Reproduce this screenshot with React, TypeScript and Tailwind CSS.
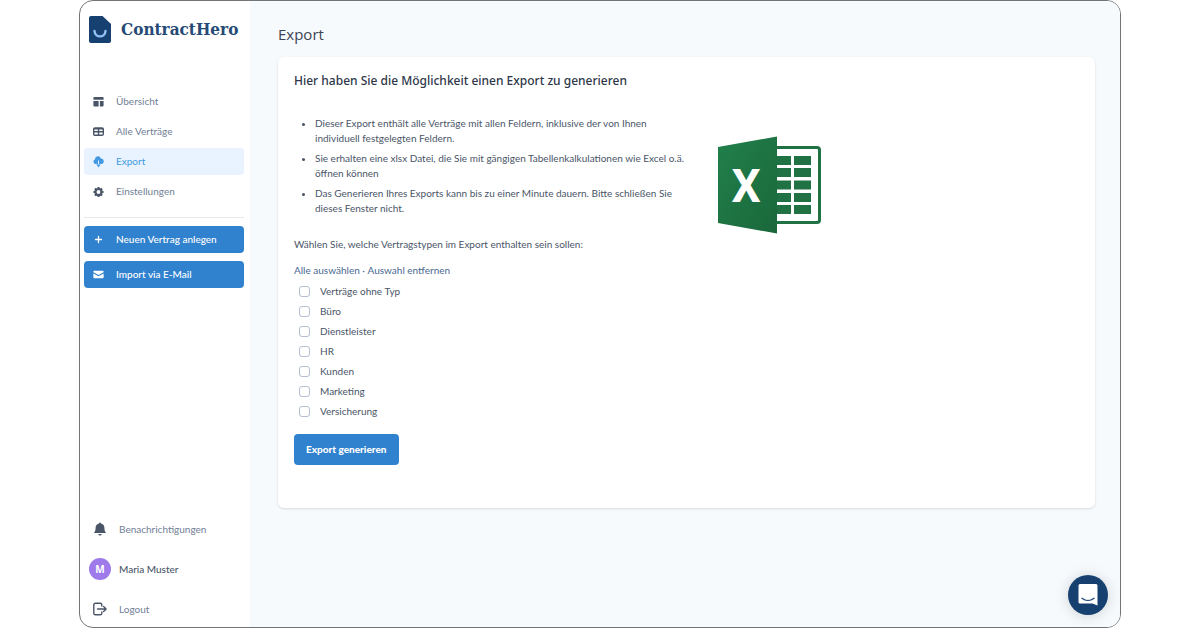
import { useState } from "react";
import type { ReactNode } from "react";

const CONTRACT_TYPES = [
  "Verträge ohne Typ",
  "Büro",
  "Dienstleister",
  "HR",
  "Kunden",
  "Marketing",
  "Versicherung",
];

const HINTS = [
  "Dieser Export enthält alle Verträge mit allen Feldern, inklusive der von Ihnen individuell festgelegten Feldern.",
  "Sie erhalten eine xlsx Datei, die Sie mit gängigen Tabellenkalkulationen wie Excel o.ä. öffnen können",
  "Das Generieren Ihres Exports kann bis zu einer Minute dauern. Bitte schließen Sie dieses Fenster nicht.",
];

function LogoIcon() {
  return (
    <svg width="22" height="27" viewBox="0 0 22 27" aria-hidden="true">
      <path d="M2 0h11.500l8.500 8v17a2 2 0 0 1-2 2H2a2 2 0 0 1-2-2V2a2 2 0 0 1 2-2z" fill="#15406f" />
      <path d="M5.500 15c.5 7.200 10.500 7.200 11 0" fill="none" stroke="#90c2f5" strokeWidth="2.400" strokeLinecap="round" />
    </svg>
  );
}

function DashboardIcon() {
  return (
    <svg width="11" height="11" viewBox="0 0 11 11" fill="currentColor" aria-hidden="true">
      <path d="M1.200 1h8.600a.8.800 0 0 1 .8.800v2H.4v-2A.8.800 0 0 1 1.200 1zM.4 5h5.200v5.400H1.200a.8.800 0 0 1-.8-.8zM6.900 5h3.700v4.600a.8.800 0 0 1-.8.800H6.900z" />
    </svg>
  );
}

function TableIcon() {
  return (
    <svg width="11" height="11" viewBox="0 0 11 11" aria-hidden="true">
      <rect x=".7" y="2" width="9.600" height="7.300" rx="1.300" fill="none" stroke="currentColor" strokeWidth="1.400" />
      <path d="M.7 2.800h9.600M.7 5.800h9.600M5.500 3v6" stroke="currentColor" strokeWidth="1.400" />
    </svg>
  );
}

function CloudDownloadIcon() {
  return (
    <svg width="11" height="12" viewBox="0 0 12 12" aria-hidden="true">
      <path d="M2.900 8.200A2.700 2.700 0 0 1 2.200 3 3.200 3.200 0 0 1 8.500 2.200 3 3 0 0 1 9 8.200h-.4L6 11.900 3.400 8.200z" fill="currentColor" />
      <path d="M6 4.300v4.500" stroke="#e8f3ff" strokeWidth="1" />
      <path d="M3.600 8.500h1.300M7.100 8.500h1.300" stroke="#e8f3ff" strokeWidth=".8" />
    </svg>
  );
}

function GearIcon() {
  return (
    <svg width="11" height="12" viewBox="0 0 12 12" aria-hidden="true">
      <circle cx="6" cy="6" r="3.300" fill="none" stroke="currentColor" strokeWidth="2.400" />
      <path
        d="M6 .5v2M6 9.500v2M.5 6h2M9.500 6h2M2.100 2.100l1.400 1.400M8.500 8.500l1.400 1.400M2.100 9.900l1.400-1.400M8.500 3.500l1.400-1.400"
        stroke="currentColor"
        strokeWidth="2.200"
      />
    </svg>
  );
}

function PlusIcon() {
  return (
    <svg width="11" height="11" viewBox="0 0 11 11" aria-hidden="true">
      <path d="M5.500 2.500v6M2.500 5.500h6" stroke="currentColor" strokeWidth="1.300" strokeLinecap="round" />
    </svg>
  );
}

function MailIcon() {
  return (
    <svg width="11" height="11" viewBox="0 0 12 11" fill="currentColor" aria-hidden="true">
      <path d="M1.400 1.500h9.200a1 1 0 0 1 1 1v.6L6 6 .4 3.100v-.6a1 1 0 0 1 1-1z" />
      <path d="M.4 4.400 6 7.300l5.600-2.900v4.100a1 1 0 0 1-1 1H1.400a1 1 0 0 1-1-1z" />
    </svg>
  );
}

function BellIcon() {
  return (
    <svg width="14" height="14" viewBox="0 0 14 14" fill="currentColor" aria-hidden="true">
      <path d="M7 .6c.6 0 .9.400.9.900 2.200.4 3.500 2.100 3.500 4.300 0 2.400.4 3.400 1.300 4.400.2.300.1.900-.5.900H1.800c-.6 0-.7-.6-.5-.9.900-1 1.300-2 1.300-4.400 0-2.200 1.300-3.900 3.500-4.300 0-.5.300-.9.900-.9zM5.300 11.900h3.400a1.700 1.500 0 0 1-3.400 0z" />
    </svg>
  );
}

function LogoutIcon() {
  return (
    <svg width="14" height="14" viewBox="0 0 14 14" fill="none" stroke="currentColor" strokeWidth="1.400" strokeLinecap="round" strokeLinejoin="round" aria-hidden="true">
      <path d="M8.800 4V2.800a1.600 1.600 0 0 0-1.600-1.600H2.400A1.600 1.600 0 0 0 .8 2.800v8.400a1.600 1.600 0 0 0 1.600 1.600h4.800a1.600 1.600 0 0 0 1.600-1.600V10" />
      <path d="M4.500 7h8.600M10.600 4.500 13.100 7l-2.500 2.500" />
    </svg>
  );
}

function ExcelLogo() {
  return (
    <svg width="104" height="98" viewBox="0 0 104 98" role="img" aria-label="Excel">
      <defs>
        <linearGradient id="cover" x1="0" y1="0" x2="1" y2="1">
          <stop offset="0" stopColor="#21804a" />
          <stop offset="1" stopColor="#1a673b" />
        </linearGradient>
      </defs>
      <rect x="50" y="11.500" width="51.500" height="75" rx="2.500" fill="#fff" stroke="#207245" strokeWidth="3" />
      <g fill="#207245">
        {[20, 32, 44.500, 57, 69].map((y) => (
          <g key={y}>
            <rect x="58" y={y} width="15" height="9" />
            <rect x="76" y={y} width="17" height="9" />
          </g>
        ))}
      </g>
      <path d="M0 11 59 .5v97L0 87z" fill="url(#cover)" />
      <text x="28" y="66" textAnchor="middle" fill="#fff" className="font-['Roboto',sans-serif] text-[46px] font-bold">
        X
      </text>
    </svg>
  );
}

function ChatIcon() {
  return (
    <svg width="20" height="22" viewBox="0 0 20 22" aria-hidden="true">
      <path d="M2 0h16a1.500 1.500 0 0 1 1.500 1.500V21.500L14.500 19.500H2A1.500 1.500 0 0 1 .5 18V1.500A1.500 1.500 0 0 1 2 0z" fill="#fff" />
      <path d="M4 14.300c3.600 2.800 8.400 2.800 12 0" fill="none" stroke="#15406f" strokeWidth="1.300" strokeLinecap="round" />
    </svg>
  );
}

function NavLink({ icon, label, active = false }: { icon: ReactNode; label: string; active?: boolean }) {
  return (
    <a
      href="#"
      aria-current={active ? "page" : undefined}
      className={`flex h-[27px] items-center rounded ${active ? "bg-[#e8f3ff] text-[#4299e1]" : "text-[#718096]"}`}
    >
      <span className={`flex w-[29px] justify-center ${active ? "text-[#4299e1]" : "text-[#4a5568]"}`}>{icon}</span>
      <span className="pl-[3px]">{label}</span>
    </a>
  );
}

function ActionButton({ icon, label }: { icon: ReactNode; label: string }) {
  return (
    <button type="button" className="flex h-[27px] items-center rounded bg-[#3182ce] font-medium text-white">
      <span className="flex w-[29px] justify-center">{icon}</span>
      <span className="pl-[3px]">{label}</span>
    </button>
  );
}

export default function App() {
  const [selected, setSelected] = useState<string[]>([]);

  const toggle = (type: string) => {
    setSelected((prev) => (prev.includes(type) ? prev.filter((t) => t !== type) : [...prev, type]));
  };

  return (
    <div className="mx-[79px] flex min-h-screen overflow-hidden rounded-[14px] border border-[#747474] bg-white font-['Lato',sans-serif] text-[10px] leading-[15px] text-[#4a5568]">
      <aside className="flex w-[170px] shrink-0 flex-col pr-1.5 pl-1">
        <a href="#" className="mt-[15px] flex items-center gap-2.5 pl-[5px] text-[#254a75]">
          <LogoIcon />
          <span className="font-['DejaVu_Serif_Condensed','DejaVu_Serif',serif] text-[17px] leading-[27px] font-bold">
            ContractHero
          </span>
        </a>

        <nav className="mt-[45px] flex flex-col gap-[3px]">
          <NavLink icon={<DashboardIcon />} label="Übersicht" />
          <NavLink icon={<TableIcon />} label="Alle Verträge" />
          <NavLink icon={<CloudDownloadIcon />} label="Export" active />
          <NavLink icon={<GearIcon />} label="Einstellungen" />
        </nav>

        <div className="mt-3 flex flex-col gap-2 border-t border-[#e5e9ee] pt-2">
          <ActionButton icon={<PlusIcon />} label="Neuen Vertrag anlegen" />
          <ActionButton icon={<MailIcon />} label="Import via E-Mail" />
        </div>

        <div className="mt-auto -mb-0.5 flex flex-col">
          <a href="#" className="flex h-10 items-center gap-2 pl-[5px] text-[#718096]">
            <span className="flex w-[22px] justify-center text-[#4a5568]"><BellIcon /></span>
            Benachrichtigungen
          </a>
          <a href="#" className="flex h-10 items-center gap-2 pl-[5px] font-medium">
            <span className="flex size-[22px] items-center justify-center rounded-full bg-[#9f7aea] font-['Open_Sans',sans-serif] font-bold text-white">
              M
            </span>
            Maria Muster
          </a>
          <a href="#" className="flex h-10 items-center gap-2 pl-[5px] text-[#718096]">
            <span className="flex w-[22px] justify-center text-[#4a5568]"><LogoutIcon /></span>
            Logout
          </a>
        </div>
      </aside>

      <main className="flex-1 bg-[#f6fafd] pt-[21px] pr-[25px] pl-7">
        <h1 className="font-['Open_Sans',sans-serif] text-[15px] leading-6 text-[#3b4453]">Export</h1>

        <section className="mt-[11px] rounded-md bg-white px-4 pt-4 pb-[43px] shadow-sm">
          <h2 className="font-['Noto_Sans',sans-serif] text-xs leading-4 font-medium text-[#2d3748]">
            Hier haben Sie die Möglichkeit einen Export zu generieren
          </h2>

          <div className="mt-[27px] grid grid-cols-2">
            <ul className="flex list-disc flex-col gap-[5px] pl-[21px]">
              {HINTS.map((hint) => (
                <li key={hint}>{hint}</li>
              ))}
            </ul>
            <div className="pt-5 pl-[31px]">
              <ExcelLogo />
            </div>
          </div>

          <p className="mt-[3px]">Wählen Sie, welche Vertragstypen im Export enthalten sein sollen:</p>

          <div className="mt-[11px] text-[#4a6a92]">
            <button type="button" onClick={() => setSelected(CONTRACT_TYPES)}>Alle auswählen</button>
            {" · "}
            <button type="button" onClick={() => setSelected([])}>Auswahl entfernen</button>
          </div>

          <div className="mt-[3px] flex flex-col items-start pl-[5px]">
            {CONTRACT_TYPES.map((type) => (
              <label key={type} className="flex h-5 items-center gap-2.5">
                <input
                  type="checkbox"
                  checked={selected.includes(type)}
                  onChange={() => toggle(type)}
                  className="size-[11px] appearance-none rounded-[3px] border border-[#b4c0d0] bg-white checked:bg-[#3182ce]"
                />
                {type}
              </label>
            ))}
          </div>

          <button type="button" className="mt-[13px] h-[31px] rounded-sm bg-[#3182ce] px-3 font-black text-white">
            Export generieren
          </button>
        </section>
      </main>

      <button
        type="button"
        aria-label="Chat öffnen"
        className="fixed right-[92px] bottom-[13px] flex size-10 items-center justify-center rounded-full bg-[#15406f] shadow-[0_1px_14px_rgba(0,0,0,0.16)]"
      >
        <ChatIcon />
      </button>
    </div>
  );
}
